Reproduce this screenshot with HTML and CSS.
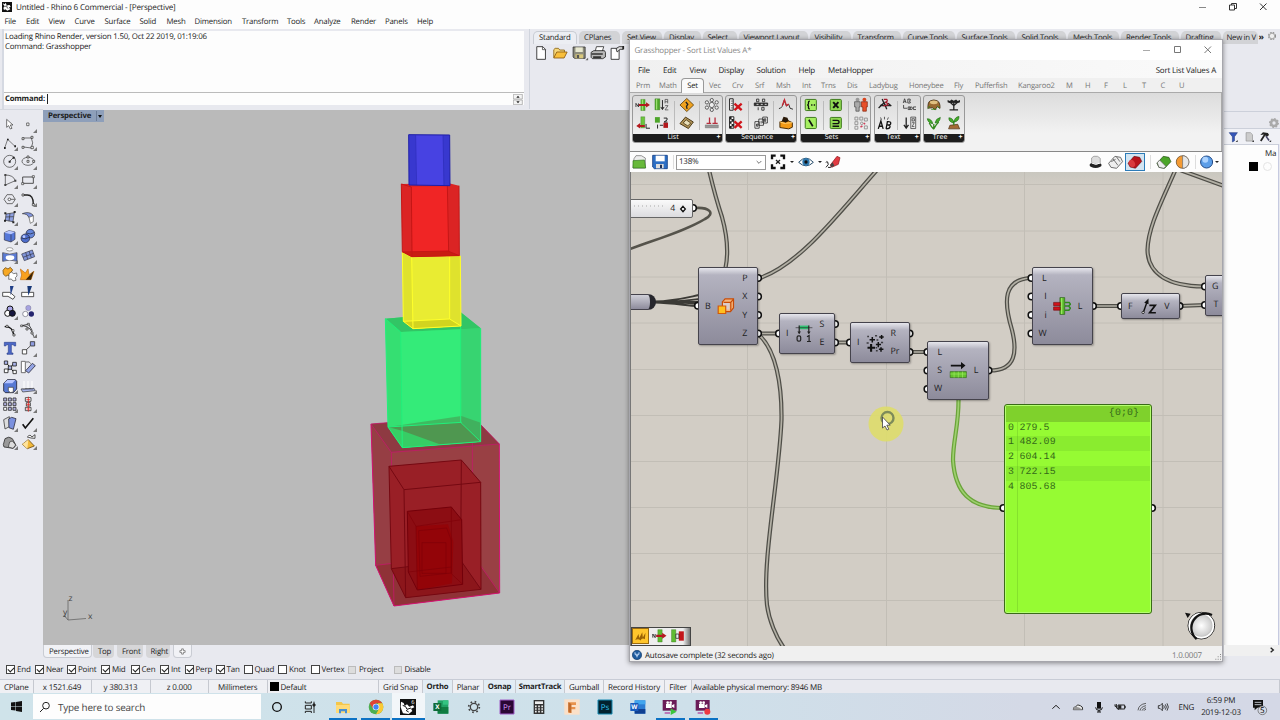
FILE: index.html
```html
<!DOCTYPE html>
<html lang="en">
<head>
    <meta charset="UTF-8">
    <meta name="viewport" content="width=device-width, initial-scale=1.0">
    <title>Untitled - Rhino 6 Commercial - [Perspective]</title>
    <link rel="stylesheet" href="styles.css">
</head>
<body>
    <!-- Rhino title bar -->
    <div class="titlebar">
        <svg class="app-icon" viewBox="0 0 30 30"><rect width="30" height="30" fill="#111"/><path d="M2 4l6 3 3-5 3 8 9-1 3 6-5 1 4 6-9 4-6-4-4 2-2-7 4-3z" fill="#fff"/><path d="M8 12l6 2 4 6M14 9l2 4" stroke="#111" stroke-width="2" fill="none"/></svg>
        <span class="title-text">Untitled - Rhino 6 Commercial - [Perspective]</span>
        <svg class="win-buttons" viewBox="0 0 84 14" fill="none" stroke="#333"><path d="M3 7.500h7" stroke="#888"/><path d="M33.500 5h5v5h-5zM35.500 5V3.500h5v5H39"/><path d="M64 3.500l6.500 6.500M70.500 3.500L64 10"/></svg>
    </div>
    <nav class="menubar">
        <span>File</span><span>Edit</span><span>View</span><span>Curve</span><span>Surface</span><span>Solid</span><span>Mesh</span><span>Dimension</span><span>Transform</span><span>Tools</span><span>Analyze</span><span>Render</span><span>Panels</span><span>Help</span>
    </nav>

    <!-- Command history and toolbar tabs -->
    <div class="top">
        <div class="command">
            <div class="history">
                <p class="line1">Loading Rhino Render, version 1.50, Oct 22 2019, 01:19:06</p>
                <p class="line2">Command: Grasshopper</p>
            </div>
            <div class="prompt">
                <b>Command:</b><i class="caret"></i>
                <svg class="spinner" viewBox="0 0 30 33"><path d="M1 1h27v14H1zM1 18h27v14H1z" fill="#f4f4f4" stroke="#999" stroke-width="2"/><path d="M15 5l5 6H10zM15 28l5-6H10z" fill="#222"/></svg>
            </div>
        </div>
        <div class="toolbars">
            <div class="tabs">
                <span class="active">Standard</span><span>CPlanes</span><span>Set View</span><span>Display</span><span>Select</span><span>Viewport Layout</span><span>Visibility</span><span>Transform</span><span>Curve Tools</span><span>Surface Tools</span><span>Solid Tools</span><span>Mesh Tools</span><span>Render Tools</span><span>Drafting</span><span class="last">New in V</span><b>»</b>
                <svg class="gear" viewBox="0 0 30 30"><circle cx="15" cy="15" r="10" fill="#ddd" stroke="#888" stroke-width="4" stroke-dasharray="5 3"/><circle cx="15" cy="15" r="8" fill="#eee" stroke="#999" stroke-width="2"/></svg>
            </div>
            <div class="file-icons">
                <svg viewBox="0 0 56 48"><path d="M14 5h18l8 8v30H14z" fill="#fff" stroke="#222" stroke-width="2.500"/><path d="M31 5v9h9" fill="none" stroke="#222" stroke-width="2"/></svg>
                <svg viewBox="0 0 56 48"><path d="M8 38V14l4-4h10l4 5h14v8" fill="#f6d77a" stroke="#8a6414" stroke-width="2.500"/><path d="M8 39l9-18h31l-9 18z" fill="#f8bf3b" stroke="#8a5a10" stroke-width="2.500"/></svg>
                <svg viewBox="0 0 56 48"><path d="M9 6h36v34H13l-4-4z" fill="#8c8c7c" stroke="#333" stroke-width="2.500"/><path d="M16 7h22v14H16z" fill="#e8e8d0"/><path d="M16 28h23v12H16z" fill="#d8c87c"/><path d="M20 30h7v9h-7z" fill="#555"/><path d="M54 38v8h-8z" fill="#666"/></svg>
                <svg viewBox="0 0 56 48"><path d="M18 20l4-15h22l-5 15z" fill="#fff" stroke="#333" stroke-width="2.500"/><path d="M6 22l8-5h32l3 5v14l-8 5H10l-4-4z" fill="#b9b9b9" stroke="#222" stroke-width="2.500"/><path d="M7 25h34v4H7zM12 34h24v5H12z" fill="#333"/></svg>
                <svg viewBox="0 0 56 48"><path d="M9 10h24v33H9z" fill="#fff" stroke="#222" stroke-width="2.500"/><path d="M24 11l9-6h12v8h-9l-9 8z" fill="#ddd" stroke="#222" stroke-width="2.500"/><path d="M43 3h5v10h-5z" fill="#222"/></svg>
            </div>
        </div>
    </div>

    <div class="workspace">
        <!-- Main tool palette, two columns -->
        <aside class="palette">
            <svg viewBox="0 0 54 56"><path d="M17 13v24l6-5 5 10 5-2-5-10h8z" fill="#fff" stroke="#333" stroke-width="2"/></svg>
            <div class="more"><svg viewBox="0 0 54 56"><path d="M23 24h7v8h-7z" fill="#fff" stroke="#333" stroke-width="2"/></svg></div>
            <div class="more"><svg viewBox="0 0 54 56"><path d="M11 42l9-26 22 21" fill="none" stroke="#444" stroke-width="2"/><path d="M9 39h5v6H9zM18 14h5v5h-5zM40 34h5v6h-5z" fill="#222"/></svg></div>
            <div class="more"><svg viewBox="0 0 54 56"><path d="M13 12h24q8 14 0 30L13 39" fill="none" stroke="#333" stroke-width="2"/><path d="M9 11h6v6H9zM36 7h6v6h-6zM9 37h6v6H9zM36 37h7v7h-7z" fill="#fff" stroke="#222" stroke-width="2"/></svg></div>
            <div class="more"><svg viewBox="0 0 54 56"><circle cx="26" cy="28" r="18" fill="none" stroke="#333" stroke-width="2"/><path d="M25 29l12-12" stroke="#222" stroke-width="2"/><path d="M23 26h6v6h-6zM35 14h6v6h-6z" fill="#222"/></svg></div>
            <div class="more"><svg viewBox="0 0 54 56"><ellipse cx="27" cy="28" rx="18" ry="12" fill="none" stroke="#333" stroke-width="2"/><path d="M24 12h6v6h-6zM24 25h6v6h-6zM41 25h6v6h-6z" fill="#fff" stroke="#222" stroke-width="2"/></svg></div>
            <div class="more"><svg viewBox="0 0 54 56"><path d="M13 12q24 0 30 17L13 42z" fill="none" stroke="#333" stroke-width="2"/><path d="M10 9h6v6h-6zM10 39h6v6h-6zM40 26h6v6h-6z" fill="#444"/></svg></div>
            <div class="more"><svg viewBox="0 0 54 56"><path d="M11 18h32v19H11z" fill="none" stroke="#333" stroke-width="2.500"/><path d="M8 35h6v6H8zM40 14h6v6h-6z" fill="#fff" stroke="#333" stroke-width="2"/></svg></div>
            <div class="more"><svg viewBox="0 0 54 56"><path d="M18 14h16l9 14-9 13H18l-9-13z" fill="none" stroke="#555" stroke-width="2.500"/><path d="M24 28h18" stroke="#333" stroke-width="2"/><circle cx="25" cy="28" r="4" fill="#fff" stroke="#222" stroke-width="2"/></svg></div>
            <div class="more"><svg viewBox="0 0 54 56"><path d="M13 15h12q18 0 18 27" fill="none" stroke="#222" stroke-width="4"/><path d="M9 12h6v6H9zM40 41h6v6h-6z" fill="#fff" stroke="#222" stroke-width="2"/></svg></div>
            <div class="more"><svg viewBox="0 0 54 56"><path d="M15 18l25-4-4 27-23-4z" fill="#8d9fe0" stroke="#333" stroke-width="2"/><path d="M27 16l-3 24M14 27l24-1" stroke="#333" stroke-width="2"/><path d="M10 13h6v6h-6zM38 9h6v6h-6zM9 35h6v6H9zM34 40h6v6h-6z" fill="#222"/></svg></div>
            <div class="more"><svg viewBox="0 0 54 56"><path d="M10 17q20-8 32 4l-3 20q-4-13-10-13-2-10-19-11z" fill="#7f93dd" stroke="#333" stroke-width="2"/><path d="M30 28l13-5v18l-9 5z" fill="#fff" stroke="#555" stroke-width="2"/></svg></div>
            <div class="more"><svg viewBox="0 0 54 56"><path d="M10 17l14-6 18 4v22l-12 8-20-6z" fill="#5577d8" stroke="#334" stroke-width="2"/><path d="M10 17l20 5 12-7-18-4z" fill="#b9c8ff"/><path d="M30 22v23" stroke="#334" stroke-width="2"/></svg></div>
            <div class="more"><svg viewBox="0 0 54 56"><circle cx="34" cy="20" r="13" fill="#6686da" stroke="#223" stroke-width="2"/><circle cx="19" cy="34" r="13" fill="#4d6dcb" stroke="#223" stroke-width="2"/><path d="M7 33q12 6 24-2M22 18q12 6 24-1" stroke="#223" stroke-width="2" fill="none"/><circle cx="15" cy="29" r="4" fill="#b9c8ff"/></svg></div>
            <div class="more"><svg viewBox="0 0 54 56"><ellipse cx="26" cy="10" rx="10" ry="5" fill="#fff" stroke="#777" stroke-width="2"/><path d="M5 20q21 9 43 0v26q-22-8-43 0z" fill="#5a7ad4" stroke="#334" stroke-width="2"/><ellipse cx="27" cy="35" rx="13" ry="7" fill="#fff"/></svg></div>
            <div class="more"><svg viewBox="0 0 54 56"><path d="M8 24l32-12 7 20-31 12z" fill="#7f93d8" stroke="#334" stroke-width="2"/><path d="M12 34l32-12M20 19l6 21M30 15l7 20" stroke="#334" stroke-width="2"/></svg></div>
            <svg viewBox="0 0 54 56"><path d="M6 16l7-8 8 4 7-5 7 8-5 7 5 7-9 5-5-4-7 4-7-7z" fill="#f7a823" stroke="#7a5312" stroke-width="2.500"/><path d="M24 26l7-5 7 5 9-2 1 9-5 5 2 8-9 2-5-6-8 1z" fill="#fff" stroke="#444" stroke-width="2"/></svg>
            <svg viewBox="0 0 54 56"><path d="M4 12l15 12 8-12 3 17 15-10-9 25H4l4-14z" fill="#f9a11f" stroke="#c06c10" stroke-width="2"/><path d="M20 44l24-26-8 26z" fill="#3a2508"/></svg>
            <svg viewBox="0 0 54 56"><path d="M5 28h22l15 13-6 8-15-9H5z" fill="#fff" stroke="#333" stroke-width="2.500"/><path d="M27 9h11L29 37z" fill="#203f88"/></svg>
            <svg viewBox="0 0 54 56"><path d="M8 28h36v13H8z" fill="#fff" stroke="#333" stroke-width="2.500"/><path d="M25 9h14L28 38z" fill="#173878"/></svg>
            <div class="more"><svg viewBox="0 0 54 56"><circle cx="27" cy="21" r="9" fill="#aaa6e8" stroke="#111" stroke-width="3"/><circle cx="20" cy="34" r="9" fill="#fff" stroke="#111" stroke-width="3"/><circle cx="34" cy="34" r="9" fill="#16163f" stroke="#111" stroke-width="3"/></svg></div>
            <svg viewBox="0 0 54 56"><circle cx="28" cy="18" r="8" fill="#a6a2e0" stroke="#667"/><circle cx="19" cy="36" r="8" fill="#fff" stroke="#667" stroke-width="2"/><circle cx="37" cy="36" r="8" fill="#24246e"/></svg>
            <svg viewBox="0 0 54 56"><path d="M11 17q23-2 27 24" fill="none" stroke="#111" stroke-width="4"/><path d="M15 13h6v6h-6zM33 26h6v6h-6zM36 39h6v6h-6z" fill="#fff" stroke="#222" stroke-width="2"/></svg>
            <div class="more"><svg viewBox="0 0 54 56"><path d="M8 14l20-4M12 14q26 3 32 33M28 9l12 20" fill="none" stroke="#222" stroke-width="2.500"/><path d="M5 12h6v5H5zM25 7h6v5h-6zM21 21h6v6h-6zM36 33h6v6h-6z" fill="#fff" stroke="#222" stroke-width="2"/></svg></div>
            <svg viewBox="0 0 54 56"><path d="M10 10h34v11h-4l-3-4h-6v25h5v4H18v-4h4V17h-5l-3 4h-4z" fill="#4c68c8" stroke="#304590" stroke-width="2"/></svg>
            <div class="more"><svg viewBox="0 0 54 56"><path d="M10 32h13v13H10z" fill="#fff" stroke="#333" stroke-width="2.500"/><path d="M34 8h13v13H34z" fill="#8e9be0" stroke="#333" stroke-width="2.500"/><path d="M22 32l11-10" stroke="#333" stroke-width="2.500"/></svg></div>
            <svg viewBox="0 0 54 56"><path d="M18 17l20 25M38 17L18 40" stroke="#222" stroke-width="3"/><path d="M10 9h10v10H10zM35 13h11v11H35zM22 24h10v10H22z" fill="#aab4ea" stroke="#222" stroke-width="2.500"/><path d="M10 33h11v11H10zM36 37h10v10H36z" fill="#fff" stroke="#222" stroke-width="2.500"/></svg>
            <svg viewBox="0 0 54 56"><path d="M7 10h12v34H7z" fill="#fff" stroke="#555" stroke-width="2.500"/><path d="M20 38l20-22 9 7-20 22z" fill="#93a3e4" stroke="#334" stroke-width="2.500"/><path d="M21 12q12-3 14 5" fill="none" stroke="#333" stroke-width="2"/></svg>
            <div class="more"><svg viewBox="0 0 54 56"><path d="M8 19l11-11h24l4 5v23l-10 11H13l-5-5z" fill="#5879d4" stroke="#223" stroke-width="2.500"/><path d="M9 19l10-10h24l-9 10z" fill="#b7c5ff"/><path d="M22 31h15v14l-10 2-5-7z" fill="#fff" stroke="#333" stroke-width="2"/></svg></div>
            <div class="more"><svg viewBox="0 0 54 56"><path d="M6 36l39-2 4 7-38 4z" fill="#a7b4ec" stroke="#333" stroke-width="2"/><path d="M15 12v24M27 12v22M39 12v22" stroke="#fff" stroke-width="3"/><path d="M11 36h32" stroke="#333" stroke-width="2"/></svg></div>
            <div class="more"><svg viewBox="0 0 54 56"><g fill="#b4b4e4" stroke="#333" stroke-width="2.500"><path d="M8 9h9v9H8zM22 9h9v9h-9zM36 9h9v9h-9zM8 23h9v9H8zM22 23h9v9h-9zM36 23h9v9h-9zM22 37h9v9h-9zM36 37h9v9h-9z"/><path d="M8 37h9v9H8z" fill="#fff"/></g></svg></div>
            <div class="more"><svg viewBox="0 0 54 56"><path d="M19 8h17v11H19zM22 23h12v10H22zM19 37h17v10H19z" fill="#fff" stroke="#333" stroke-width="2.500"/><path d="M28 5v45M22 14h11M22 28h11M22 42h11" stroke="#d22" stroke-width="2.500"/></svg></div>
            <div class="more"><svg viewBox="0 0 54 56"><path d="M8 17l17-9v30L12 45z" fill="#ddd" stroke="#444" stroke-width="2.500"/><path d="M23 15l9-5 13 4-8 32-13-5z" fill="#7b91df" stroke="#334" stroke-width="2.500"/></svg></div>
            <div class="more"><svg viewBox="0 0 54 56"><path d="M11 31l8 11 24-29" fill="none" stroke="#111" stroke-width="5"/></svg></div>
            <div class="more"><svg viewBox="0 0 54 56"><path d="M7 35l5-18q12-9 22 0l11 20-8 9-28-4z" fill="#999" stroke="#333" stroke-width="2.500"/><path d="M22 42l4-15 8-3 10 12-8 10z" fill="#ddd" stroke="#333" stroke-width="2"/></svg></div>
            <div class="more"><svg viewBox="0 0 54 56"><path d="M28 20l18 19-21 8-15-13z" fill="#f1b93b" stroke="#6f4b10" stroke-width="2.500"/><path d="M28 20l-3 27-15-13z" fill="#ffe39a"/><path d="M25 12q8-10 14 0l9-7v11l-12-1z" fill="#fff" stroke="#333" stroke-width="2.500"/></svg></div>
        </aside>

        <!-- Perspective viewport -->
        <main class="viewport">
            <div class="view-label"><b>Perspective</b><i></i></div>
            <svg class="scene" viewBox="43 110 586 535">
                <g transform="translate(350 120) scale(.33333)" stroke-linejoin="round">
                    <!-- outer crimson box -->
                    <path d="M63 912l304-24 81 84 1 447-317 39-55-122z" fill="#994044"/>
                    <path d="M63 912l61 85 324-25-81-84z" fill="#8e3a42"/>
                    <path d="M63 912l61 85 8 461-55-122z" fill="#963e44"/>
                    <path d="M77 1336l290-34 82 117-317 39z" fill="#8f3237"/>
                    <g fill="none" stroke="#c4186b" stroke-width="3"><path d="M63 912l14 424 55 122 317-39-1-447" stroke="#d41273"/><path d="M63 912l61 85 8 461M124 997l324-25M63 912l304-24 81 84M367 888v414l82 117M77 1336l290-34" opacity=".8"/></g>
                    <!-- nested boxes -->
                    <path d="M117 1039l217-19 58 67 1 321-226 25-43-87z" fill="#991f26"/>
                    <path d="M124 1346l208-25 61 87-226 25z" fill="#8c161b"/>
                    <path d="M117 1039l217-19 58 67 1 321-226 25-43-87zM117 1039l45 70 5 324M162 1109l230-22M334 1020l-2 301 61 87M124 1346l208-25" fill="none" stroke="#740811" stroke-width="3"/>
                    <path d="M172 1174l132-13 31 38 3 194-136 17-27-54z" fill="#8c0d13"/>
                    <path d="M198 1219l96-6 16 52-4 125-104 20z" fill="#930408"/>
                    <path d="M172 1174l132-13 31 38 3 194-136 17-27-54z" fill="none" stroke="#72000a" stroke-width="3"/>
                    <path d="M172 1174l26 45 4 191M198 1219l137-20M304 1161v200l34 32M175 1356l129-15M206 1232l84-8 14 38v97l-94 10zM216 1268h72v92h-72z" fill="none" stroke="#7e0008" stroke-width="2"/>
                    <!-- green box -->
                    <path d="M106 596l226-19 60 48v340l-235 18-43-62z" fill="#35df72"/>
                    <path d="M106 596l226-19 60 48-240 11z" fill="#32c565"/>
                    <path d="M152 636l180-8v280l60 57-235 18z" fill="#34eb79"/>
                    <path d="M332 628l60-3v340l-57-58z" fill="#37d471"/>
                    <path d="M114 921l221-14 57 58-235 18z" fill="#4f9750"/>
                    <path d="M114 921l43 62 112-10-110-40z" fill="#37cd65"/>
                    <path d="M114 921l220-33 58 20v57l-57-58z" fill="#49944e" opacity=".55"/>
                    <path d="M106 596l8 325 43 62 235-18V625M106 596l46 40 5 347M332 590v317l60 58M114 921l221-14" fill="none" stroke="#20f07a" stroke-width="3"/>
                    <!-- yellow box -->
                    <path d="M157 396l146-4 28 16 2 210-144 8-29-22z" fill="#dfe22d"/>
                    <path d="M185 410l114-2v188l34 22-144 8z" fill="#e9ec32"/>
                    <path d="M160 604l139-7 34 21-144 8z" fill="#d2d41f"/>
                    <path d="M157 396l3 208 29 22 144-8-2-210-146 2zM185 410l4 216M299 408v189l34 21M160 604l139-7" fill="none" stroke="#ffff2a" stroke-width="3"/>
                    <!-- red box -->
                    <path d="M154 192l140-3 33 8 1 210-143 3-28-15z" fill="#db2424"/>
                    <path d="M184 200l110-1 1 195-108 15z" fill="#f02525"/>
                    <path d="M157 396l138-3 33 14-143 3z" fill="#c91d12"/>
                    <path d="M154 192l3 203 28 15 143-3-1-210M154 192l30 9 2 209M292 196l4 198 32 13M157 396l138-3" fill="none" stroke="#c51616" stroke-width="3"/>
                    <!-- blue box -->
                    <path d="M176 44l123 1 1 152-123-2z" fill="#3838cf"/>
                    <path d="M197 46h82l2 149h-82z" fill="#4742e2"/>
                    <path d="M197 46l3 150M279 46l3 150" fill="none" stroke="#2c2cb8" stroke-width="2"/>
                    <path d="M176 44l123 1 1 152-123-2z" fill="none" stroke="#1f1fa8" stroke-width="3"/>
                </g>
                <g fill="none" stroke="#666" stroke-width=".8"><path d="M68 600v20l18-1.500M64 615l4 5M63 616l3 1"/></g>
                <g class="axis"><text x="68.500" y="601">z</text><text x="63" y="615">y</text><text x="88" y="619">x</text></g>
            </svg>
        </main>

        <!-- Layer panel -->
        <aside class="layers">
            <div class="layers-head"><svg class="gear" viewBox="0 0 30 30"><circle cx="15" cy="15" r="9" fill="none" stroke="#aaa" stroke-width="8"/><circle cx="15" cy="15" r="13" fill="none" stroke="#aaa" stroke-width="4" stroke-dasharray="5 5"/></svg></div>
            <div class="layers-tools">
                <svg viewBox="0 0 48 48"><path d="M11 9h28L29 23v14l-7 4V23z" fill="#3656b8" stroke="#223a80" stroke-width="2"/><path d="M40 34v7h-7z" fill="#333"/></svg>
                <svg viewBox="0 0 48 48"><path d="M14 9h15l7 7v22H14z" fill="#ccc" stroke="#888" stroke-width="2"/><path d="M41 34v7h-7z" fill="#333"/></svg>
                <svg viewBox="0 0 48 48"><path d="M8 17l9-9 17 2 4 7-7 6-6-4-13 20-5-3 13-21z" fill="#222"/><path d="M27 21l11 15" stroke="#446" stroke-width="5"/><path d="M45 34v7h-7z" fill="#333"/></svg>
            </div>
            <div class="layers-list"><p>Ma</p><div class="layer-row"><i class="swatch"></i><i class="material"></i></div></div>
            <div class="layers-scroll"><svg viewBox="0 0 30 30"><path d="M11 8l8 7-8 7" fill="none" stroke="#222" stroke-width="4"/></svg></div>
        </aside>
    </div>

    <div class="view-tabs"><span class="active">Perspective</span><span>Top</span><span>Front</span><span>Right</span><span class="add"><svg viewBox="0 0 24 24"><path d="M9 3h6v6h6v6h-6v6H9v-6H3V9h6z" fill="#fff" stroke="#666" stroke-width="2.500"/></svg></span></div>

    <!-- Object snaps -->
    <div class="osnap">
        <label><i class="on"></i>End</label><label><i class="on"></i>Near</label><label><i class="on"></i>Point</label><label><i class="on"></i>Mid</label><label><i class="on"></i>Cen</label><label><i class="on"></i>Int</label><label><i class="on"></i>Perp</label><label><i class="on"></i>Tan</label><label><i></i>Quad</label><label><i></i>Knot</label><label><i></i>Vertex</label><label><i class="off"></i>Project</label><label><i class="off"></i>Disable</label>
    </div>

    <footer class="status">
        <span>CPlane</span><span>x 1521.649</span><span>y 380.313</span><span>z 0.000</span><span>Millimeters</span><span class="layer"><i></i>Default</span><span>Grid Snap</span><b>Ortho</b><span>Planar</span><b>Osnap</b><b>SmartTrack</b><span>Gumball</span><span>Record History</span><span>Filter</span><span class="memory">Available physical memory: 8946 MB</span>
    </footer>

    <!-- Windows taskbar -->
    <div class="taskbar">
        <div class="start"><svg viewBox="0 0 22 22"><path d="M0 3l9-1v8H0zM10 2l12-2v10H10zM0 11h9v8l-9-1zM10 11h12v11l-12-2z" fill="#111"/></svg></div>
        <div class="search"><svg viewBox="0 0 36 36"><circle cx="21" cy="14" r="10" fill="none" stroke="#222" stroke-width="3"/><path d="M14 22L3 33" stroke="#222" stroke-width="3"/></svg><span>Type here to search</span></div>
        <div class="apps">
            <span><svg viewBox="0 0 48 48"><circle cx="24" cy="24" r="13" fill="none" stroke="#111" stroke-width="4"/></svg></span>
            <span><svg viewBox="0 0 48 48" fill="none" stroke="#222" stroke-width="3"><path d="M10 7v5h18V7M10 19h18v11H10zM10 42v-5h18v5M36 8v34"/><path d="M33 15h6v6h-6z" fill="#222"/></svg></span>
            <span class="open"><svg viewBox="0 0 48 48"><path d="M3 9h17l4 5h20v27H3z" fill="#f4c64a"/><path d="M3 18h41v24H3z" fill="#ffdb78"/><path d="M12 30h24v13h-6v-6H18v6h-6z" fill="#4a90d0"/></svg></span>
            <span class="open"><svg viewBox="0 0 48 48"><circle cx="24" cy="24" r="22" fill="#4caf50"/><path d="M5 13a22 22 0 0 1 38 0H24l-9 16z" fill="#e04434"/><path d="M43 13a22 22 0 0 1-19 33l9-17-3-16z" fill="#fbc934"/><circle cx="24" cy="24" r="10" fill="#fff"/><circle cx="24" cy="24" r="8" fill="#4285f4"/></svg></span>
            <span class="open current"><svg viewBox="0 0 48 48"><path d="M0 0h48v48H0z" fill="#111"/><path d="M3 8l8 4 3 9 7-5 7 7 11-4 4 6-10 4 4 7-11 9-17-2-4-10-3-9z" fill="#fff"/><path d="M8 19l9 4 4 8 12-4M18 34l8 5" stroke="#111" stroke-width="3" fill="none"/><text class="six" x="34" y="16">6</text></svg></span>
            <span><svg viewBox="0 0 48 48"><path d="M14 4h32v40H14z" fill="#21a366"/><path d="M30 4h16v13H30z" fill="#33c481"/><path d="M14 24h32v20H14z" fill="#107c41"/><path d="M1 12h24v24H1z" fill="#0e6b39"/><text class="glyph" x="13" y="31">X</text></svg></span>
            <span><svg viewBox="0 0 48 48"><circle cx="24" cy="24" r="11" fill="none" stroke="#444" stroke-width="4"/><circle cx="24" cy="24" r="16" fill="none" stroke="#444" stroke-width="5" stroke-dasharray="5 7.560"/></svg></span>
            <span><svg viewBox="0 0 48 48"><path d="M3 3h42v42H3z" fill="#2a0634" stroke="#a05cc8" stroke-width="3"/><text class="glyph big pr" x="24" y="32">Pr</text></svg></span>
            <span><svg viewBox="0 0 48 48"><path d="M8 3h32v42H8z" fill="#333"/><path d="M12 7h24v8H12z" fill="#eee"/><path d="M12 22h25M12 30h25M12 38h25" stroke="#eee" stroke-width="5" stroke-dasharray="5 4.500"/></svg></span>
            <span><svg viewBox="0 0 48 48"><path d="M1 1h46v46H1z" fill="#fbe0c8"/><path d="M13 10h23v8H22v6h12v7H22v11h-9z" fill="#e8914b"/><path d="M13 10l9 5v27l-9-4z" fill="#c06a2b"/></svg></span>
            <span><svg viewBox="0 0 48 48"><path d="M3 3h42v42H3z" fill="#02222f" stroke="#1287b0" stroke-width="3"/><text class="glyph big ps" x="24" y="32">Ps</text></svg></span>
            <span><svg viewBox="0 0 48 48"><path d="M14 4h32v40H14z" fill="#2b7cd3"/><path d="M14 4h32v12H14z" fill="#41a5ee"/><path d="M14 30h32v14H14z" fill="#103f91"/><path d="M1 12h24v24H1z" fill="#185abd"/><text class="glyph" x="13" y="31">W</text></svg></span>
            <span class="open"><svg viewBox="0 0 48 48"><path d="M2 3h42v32H2z" fill="#6b1c58"/><path d="M12 15h17v12H12zM30 19l7-4v12l-7-4z" fill="#fff"/><circle cx="17" cy="11" r="4" fill="#fff"/><circle cx="26" cy="11" r="4" fill="#fff"/><path d="M26 28l18 10-18 10z" fill="#3ac63c"/><path d="M8 42h16" stroke="#a18" stroke-width="3"/></svg></span>
            <span class="open"><svg viewBox="0 0 48 48"><path d="M2 3h42v32H2z" fill="#6b1c58"/><path d="M12 15h17v12H12zM30 19l7-4v12l-7-4z" fill="#fff"/><circle cx="17" cy="11" r="4" fill="#fff"/><circle cx="26" cy="11" r="4" fill="#fff"/><circle cx="37" cy="38" r="9" fill="#ee3a42"/><path d="M8 42h16" stroke="#a18" stroke-width="3"/></svg></span>
        </div>
        <div class="tray">
            <svg viewBox="0 0 36 36"><path d="M7 23l11-10 11 10" fill="none" stroke="#222" stroke-width="3"/></svg>
            <svg viewBox="0 0 36 36"><path d="M4 26q-1-8 7-9 6-9 14-3 8 2 7 12z" fill="#eee" stroke="#333" stroke-width="3"/><path d="M4 26q-1-8 7-9 10 0 21 9z" fill="#999"/></svg>
            <svg viewBox="0 0 36 36"><path d="M12 3h12v20H12z" fill="#111"/><path d="M8 19q0 9 10 9t10-9M18 27v6M12 33h12" fill="none" stroke="#111" stroke-width="3"/></svg>
            <svg viewBox="0 0 36 36"><path d="M12 12h20v12H12z" fill="none" stroke="#222" stroke-width="3"/><path d="M13 13h9v10h-9zM32 15h3v6h-3z" fill="#222"/><path d="M3 10v6h6M7 9v9q0 6 8 7" fill="none" stroke="#222" stroke-width="3"/></svg>
            <svg viewBox="0 0 36 36" fill="none" stroke="#444" stroke-width="2.500"><path d="M6 28Q8 10 30 7M12 29q2-12 18-15M18 29q2-7 12-9M24 29q1-3 6-4"/></svg>
            <svg viewBox="0 0 36 36" fill="none" stroke="#222" stroke-width="2.500"><path d="M4 14h5l7-7v22l-7-7H4zM20 13q4 5 0 10M25 10q6 8 0 16M30 7q8 11 0 22"/></svg>
            <span class="lang">ENG</span>
            <div class="clock"><span>6:59 PM</span><span>2019-12-03</span></div>
            <svg class="notify" viewBox="0 0 54 54"><path d="M6 6h30v23H19l-8 8v-8H6z" fill="#111"/><path d="M11 13h20M11 20h20" stroke="#d8dde8" stroke-width="2.500"/><circle cx="34" cy="37" r="13" fill="#d5dae6" stroke="#555" stroke-width="2"/><text x="34" y="46">5</text></svg>
        </div>
    </div>

    <!-- Grasshopper window -->
    <section class="gh">
        <header class="gh-title"><span>Grasshopper - Sort List Values A*</span>
            <svg viewBox="0 0 72 12" fill="none" stroke="#777"><path d="M0 6.500h7" stroke="#aaa"/><path d="M31.500 2.500h6v6h-6zM61.500 2.500l6.500 6.500M68 2.500L61.500 9"/></svg></header>
        <nav class="gh-menu"><span>File</span><span>Edit</span><span>View</span><span>Display</span><span>Solution</span><span>Help</span><span>MetaHopper</span><span class="doc">Sort List Values A</span></nav>
        <nav class="gh-tabs"><span>Prm</span><span>Math</span><span class="active">Set</span><span>Vec</span><span>Crv</span><span>Srf</span><span>Msh</span><span>Int</span><span>Trns</span><span>Dis</span><span>Ladybug</span><span>Honeybee</span><span>Fly</span><span>Pufferfish</span><span>Kangaroo2</span><span>M</span><span>H</span><span>F</span><span>L</span><span>T</span><span>C</span><span>U</span></nav>

        <div class="ribbon">
            <div class="group">
                <div class="cells">
                    <div class="col">
                        <svg viewBox="0 0 60 55"><path d="M24 10h13v34H24z" fill="#56b32c" stroke="#2c6a14"/><path d="M29 10v34" stroke="#9be070" stroke-width="4"/><path d="M9 33V22l8 11V22" fill="none" stroke="#222" stroke-width="2.500"/><path d="M18 24h22v-5l12 8-12 8v-5H18z" fill="#b3191d"/></svg>
                        <svg viewBox="0 0 60 55"><path d="M24 8h12v34H24z" fill="#6cc53e" stroke="#2c6a14"/><path d="M40 30v13h12" fill="none" stroke="#222" stroke-width="3"/><path d="M36 33H22v-6l-12 9 12 8v-5h14z" fill="#b3191d"/></svg>
                    </div>
                    <div class="col">
                        <svg viewBox="0 0 60 55"><path d="M9 8h15v34H9z" fill="#4ea62a" stroke="#2c6a14"/><path d="M14 9v32" stroke="#9be070" stroke-width="4"/><path d="M32 12v28M27 33l5 8 5-8" fill="none" stroke="#222" stroke-width="3"/><path d="M40 22V10h8v12M40 17h8M40 29h9l-9 13h10" fill="none" stroke="#555" stroke-width="2.500"/></svg>
                        <svg viewBox="0 0 60 55"><path d="M9 9h15v17H9z" fill="#4ea62a"/><path d="M35 26h14v16H35z" fill="#b3191d"/><path d="M36 12h10v6l-9 6h10M17 32v12M24 34h10" fill="none" stroke="#222" stroke-width="3"/></svg>
                    </div>
                    <i class="sep"></i>
                    <div class="col">
                        <svg viewBox="0 0 60 55"><path d="M30 7l21 20-21 20L9 27z" fill="#f0a21f" stroke="#5a3d0a" stroke-width="2.500"/><path d="M27 18l6 7-4 6 2 8" fill="none" stroke="#222" stroke-width="4"/></svg>
                        <svg viewBox="0 0 60 55"><path d="M26 9l24 15-15 20L9 29z" fill="#b39559" stroke="#493816" stroke-width="3"/><path d="M28 17l14 10-9 9-14-9z" fill="#e9dfb8" stroke="#493816" stroke-width="2.500"/></svg>
                    </div>
                    <i class="sep"></i>
                    <div class="col">
                        <svg viewBox="0 0 60 55"><g fill="#eee" stroke="#444" stroke-width="2.500"><circle cx="30" cy="27" r="8"/><circle cx="30" cy="12" r="5"/><circle cx="30" cy="42" r="5"/><circle cx="15" cy="19" r="5"/><circle cx="45" cy="19" r="5"/><circle cx="15" cy="35" r="5"/><circle cx="45" cy="35" r="5"/></g></svg>
                        <svg viewBox="0 0 60 55"><path d="M10 33h40v9H10z" fill="#999" stroke="#555"/><path d="M23 10v17M40 10v17M14 28h14M32 28h16" stroke="#b5303e" stroke-width="4"/></svg>
                    </div>
                </div>
                <p>List<b>+</b></p>
            </div>

            <div class="group">
                <div class="cells">
                    <div class="col">
                        <svg viewBox="0 0 60 55"><path d="M11 8h11v35H11z" fill="#fff" stroke="#222" stroke-width="3"/><path d="M15 15h6M15 22h6M15 29h6M15 36h6" stroke="#222" stroke-width="2"/><path d="M26 23l22 20M48 23L26 43" stroke="#d0151b" stroke-width="7"/></svg>
                        <svg viewBox="0 0 60 55"><path d="M11 8h13v35H11z" fill="#fff" stroke="#222" stroke-width="3"/><path d="M11 8h6v7h7v8h-7v7h7v8h-7v5h-6v-7h6v-7h-6v-7h6v-6h-6z" fill="#222"/><path d="M26 22l22 20M48 22L26 42" stroke="#d0151b" stroke-width="7"/></svg>
                    </div>
                    <i class="sep"></i>
                    <div class="col">
                        <svg viewBox="0 0 60 55" fill="none" stroke="#222" stroke-width="2.500"><path d="M17 9h7v8h-7zM35 9h7v8h-7zM22 34v9M33 34h7v9h-7z"/><path d="M10 21h41v8H10z" fill="#333"/><path d="M17 25h6M30 25h6M42 25h6" stroke="#fff"/></svg>
                        <svg viewBox="0 0 60 55" fill="#fff" stroke="#222" stroke-width="2.500"><path d="M36 9h14v18H36zM24 15h14v19H24zM12 23h13v20H12zM17 30h4v7h-4zM31 20v9M41 14h4v8h-4z"/></svg>
                    </div>
                    <i class="sep"></i>
                    <div class="col">
                        <svg viewBox="0 0 60 55"><path d="M9 38q11 0 16-25l7 17 7-5 4 12 9 3" fill="none" stroke="#333" stroke-width="3"/><path d="M19 29l7-18 6 18 7-5" fill="none" stroke="#c52a35" stroke-width="4"/></svg>
                        <svg viewBox="0 0 60 55"><path d="M12 23l25-3 13 6v14l-11 5-27-4z" fill="#f49a16" stroke="#4a2c05" stroke-width="3"/><path d="M12 23l12 5 26-2" stroke="#ffd27a" stroke-width="3" fill="none"/><path d="M18 20l5-12 12 3 4 10-10 5z" fill="#2a1a0a"/></svg>
                    </div>
                </div>
                <p>Sequence<b>+</b></p>
            </div>

            <div class="group">
                <div class="cells">
                    <div class="col">
                        <svg viewBox="0 0 60 55"><rect x="13" y="10" width="34" height="34" rx="3" fill="#a6ef62" stroke="#3d7a1c" stroke-width="3"/><path d="M27 15q-5 0-4 7 0 5-4 5 4 0 4 5-1 7 4 7" fill="none" stroke="#111" stroke-width="4"/><path d="M31 27h4M39 27h4" stroke="#111" stroke-width="4"/></svg>
                        <svg viewBox="0 0 60 55"><rect x="13" y="10" width="34" height="34" rx="3" fill="#a6ef62" stroke="#3d7a1c" stroke-width="3"/><path d="M24 17l12 20" stroke="#111" stroke-width="5"/></svg>
                    </div>
                    <i class="sep"></i>
                    <div class="col">
                        <svg viewBox="0 0 60 55"><rect x="13" y="10" width="34" height="34" rx="3" fill="#8fd852" stroke="#3d7a1c" stroke-width="3"/><path d="M22 18l16 18M38 18L22 36" stroke="#111" stroke-width="6"/></svg>
                        <svg viewBox="0 0 60 55"><rect x="13" y="10" width="34" height="34" rx="3" fill="#8fd852" stroke="#3d7a1c" stroke-width="3"/><path d="M20 19h14q6 0 6 5t-6 5H20M20 37h20" fill="none" stroke="#111" stroke-width="4"/></svg>
                    </div>
                    <i class="sep"></i>
                    <div class="col">
                        <svg viewBox="0 0 60 55"><circle cx="20" cy="11" r="6" fill="#999"/><path d="M11 17h17v16h-3v13H15V33h-4z" fill="#aaa" stroke="#444" stroke-width="2"/><circle cx="41" cy="11" r="6" fill="#d8431d"/><path d="M32 17h18v16h-3v13H36V33h-4z" fill="#e8502a" stroke="#7a200a" stroke-width="2"/></svg>
                        <svg viewBox="0 0 60 55" fill="none" stroke="#888" stroke-width="2.500"><path d="M12 9h9v9h-9zM27 9h9v9h-9zM41 12h9v9h-9zM12 23h9v9h-9zM12 37h9v9h-9zM41 36h9v9h-9z"/><circle cx="33" cy="28" r="4"/><path d="M29 39l6-3M39 27l4 4" stroke="#d0405a" stroke-width="5"/></svg>
                    </div>
                </div>
                <p>Sets<b>+</b></p>
            </div>

            <div class="group">
                <div class="cells">
                    <div class="col">
                        <svg viewBox="0 0 60 55" fill="none" stroke-width="4"><path d="M11 36l17-16 8 20M15 28l33 1M22 9l6 14M40 22l10 8" stroke="#222"/><path d="M27 10h9q5 6-5 9 9 1 8 8l-13 3" stroke="#a31c2c"/></svg>
                        <svg viewBox="0 0 60 55" fill="none" stroke="#111" stroke-width="4"><path d="M10 45l8-24 7 24M13 37h10M34 45l4-22q12-1 10 6 0 4-10 4 9 0 8 6-1 6-12 6"/><path d="M17 10l3 7M29 8v8M41 10l-3 7" stroke-width="2"/></svg>
                    </div>
                    <i class="sep"></i>
                    <div class="col">
                        <svg viewBox="0 0 60 55" fill="none" stroke="#333" stroke-width="2.500"><path d="M10 21l4-13 5 13M12 17h6M24 21V9h7q3 5-3 6 6 2 3 6zM11 27v10h11M31 33h-6v8h6zM49 33h-8v8h8"/><circle cx="34" cy="37" r="4"/></svg>
                        <svg viewBox="0 0 60 55" fill="none" stroke="#222" stroke-width="3"><path d="M19 10v32M12 33l7 10 7-10" stroke-width="4"/><path d="M33 9h15v35H33zM37 14h7v7h-7zM37 26h7l-7 12h7" stroke-width="2"/></svg>
                    </div>
                </div>
                <p>Text<b>+</b></p>
            </div>

            <div class="group">
                <div class="cells">
                    <div class="col">
                        <svg viewBox="0 0 60 55"><path d="M12 37q-1-20 8-23 10-5 20 0 10 4 9 23l-9-5-6 10-8-7z" fill="#9a6a31" stroke="#3f2b10" stroke-width="2.500"/><ellipse cx="30" cy="19" rx="12" ry="6" fill="#e0c080"/><path d="M11 38l8-8M48 38l-8-8M22 40h16" stroke="#3c8a22" stroke-width="3"/></svg>
                        <svg viewBox="0 0 60 55"><path d="M30 46V30M30 46q-9-9-14-19M30 45q7-14 15-21" stroke="#348a1e" stroke-width="4" fill="none"/><path d="M10 14q13 0 17 15-14-1-17-15zM50 10q-14 3-16 17 14-1 16-17z" fill="#45ad2a" stroke="#1f6a12" stroke-width="2"/></svg>
                    </div>
                    <div class="col">
                        <svg viewBox="0 0 60 55"><path d="M11 12l7 3 5-5 7 4 7-4 5 5 7-3v7l-8 3-11-2-11 2-8-3z" fill="#222"/><path d="M30 18v22M17 42h26M31 28l8-7M29 28l-8-7" stroke="#222" stroke-width="4"/></svg>
                        <svg viewBox="0 0 60 55"><path d="M18 34l24-3 6 14H14z" fill="#a36a35" stroke="#4a2a0c" stroke-width="2"/><path d="M30 34V22" stroke="#348a1e" stroke-width="4"/><path d="M30 27Q14 24 15 11q14 1 15 16zM31 24q1-15 15-17 0 15-15 17z" fill="#45ad2a" stroke="#1f6a12" stroke-width="2"/></svg>
                    </div>
                </div>
                <p>Tree<b>+</b></p>
            </div>
        </div>

        <div class="gh-bar">
            <svg viewBox="0 0 60 54"><path d="M12 17l6-9h16l12 7v30H9z" fill="#eee" stroke="#666" stroke-width="2"/><path d="M9 23l34-2 4 24H9z" fill="#68b93a" stroke="#2e741a" stroke-width="2"/></svg>
            <svg viewBox="0 0 60 54"><path d="M8 7h44v40H13l-5-5z" fill="#2d6fc4" stroke="#143f84" stroke-width="2.500"/><path d="M17 8h27v17H17z" fill="#fff"/><path d="M18 33h23v13H18z" fill="#ddd"/><path d="M30 35h6v10h-6z" fill="#235"/></svg>
            <i class="sep"></i>
            <div class="zoom-box">138%<svg viewBox="0 0 24 24"><path d="M5 9l7 7 7-7" fill="none" stroke="#555" stroke-width="2.500"/></svg></div>
            <svg viewBox="0 0 60 54"><path d="M12 19V8h11M37 8h11v11M48 34v11H37M23 45H12V34" fill="none" stroke="#111" stroke-width="7"/><path d="M24 21l12 11M36 21L24 32" stroke="#222" stroke-width="4"/></svg>
            <i class="drop"></i>
            <svg viewBox="0 0 60 54"><path d="M8 28Q30 3 52 28 30 49 8 28z" fill="#fff" stroke="#234a68" stroke-width="3"/><circle cx="30" cy="27" r="11" fill="#2e78ae"/><circle cx="30" cy="27" r="5" fill="#111"/></svg>
            <i class="drop"></i>
            <svg viewBox="0 0 60 54"><path d="M6 43q11-9 5-16-3-4-5 2M12 43q9 4 12-6" fill="none" stroke="#222" stroke-width="3"/><path d="M19 36L39 10l9 4-5 20-20 9z" fill="#e23b42" stroke="#8a1418" stroke-width="2"/><path d="M19 36l7-8 5 10-9 5z" fill="#444"/></svg>
            <div class="preview">
                <svg viewBox="0 0 57 54"><ellipse cx="28" cy="36" rx="18" ry="9" fill="#222"/><path d="M16 29V15q5-8 18-5l8 6v14q-12 8-26-1z" fill="#ddd" stroke="#888" stroke-width="2"/><path d="M16 30q12 8 26 0" fill="none" stroke="#fff" stroke-width="3"/></svg>
                <svg viewBox="0 0 57 54"><path d="M7 31l19-21 17 3 6 13-18 20-17-3z" fill="#eee" stroke="#555" stroke-width="2.500"/><path d="M20 17l15 20M15 26l13-7M31 12l10 14" stroke="#777" stroke-width="3"/></svg>
                <svg class="pressed" viewBox="0 0 57 54"><path d="M6 31l20-23 19 3 7 14-21 23-18-4z" fill="#b8141c" stroke="#5c0508" stroke-width="2"/><ellipse cx="19" cy="32" rx="10" ry="13" fill="#d93a3e" transform="rotate(-25 19 32)"/></svg>
                <i class="sep"></i>
                <svg viewBox="0 0 57 54"><path d="M8 31l19-21 17 3 6 13-19 20-17-3z" fill="#4ba529" stroke="#234a14" stroke-width="2"/><path d="M9 29l7-8 19 19-6 6-15-3z" fill="#eee" stroke="#555" stroke-width="2"/></svg>
                <svg viewBox="0 0 57 54"><circle cx="28" cy="27" r="19" fill="#f49a32" stroke="#553c20" stroke-width="2"/><path d="M28 8a19 19 0 0 1 0 38z" fill="#e6e6e6" stroke="#666" stroke-width="2"/></svg>
                <i class="sep narrow"></i>
                <svg viewBox="0 0 57 54"><circle cx="28" cy="27" r="18" fill="#5c9ee8" stroke="#204a88" stroke-width="3"/><circle cx="24" cy="20" r="9" fill="#acd3ff"/></svg>
                <i class="drop"></i>
            </div>
        </div>

        <div class="canvas">
            <svg class="wires" viewBox="630 172 592 474" fill="none">
                <defs>
                    <path id="w1" d="M709 170C713 187 718 205 722 217C727 235 729 251 725.500 268"/>
                    <path id="w2" d="M760 278C800 264 838 214 877 170"/>
                    <path id="w3" d="M759 335C776 350 782 385 781.500 420C779 480 762 560 767 605C769 620 776 637 784 648"/>
                    <path id="w4" d="M989 370.500C1017 371 1017 350 1012 330C1003 300 1004 280 1030 278"/>
                    <path id="w5" d="M1175 171C1160 205 1148 228 1147.500 250C1148 275 1170 286 1203 286.500"/>
                    <path id="w6" d="M1180 170L1224 186"/>
                    <path id="w7" d="M759 333.500H779M835 342.500H849M909 352H927M1093 306H1121M1179 306L1205 305"/>
                    <path id="w8" d="M958.500 398C959 425 953 440 953 460C955 492 970 508 1003 508"/>
                </defs>
                <path class="grid" d="M747.500 172v474M886.500 172v474M1024.500 172v474M1163 172v474M630 184.500h592M630 231h592M630 277h592M630 323h592M630 369.500h592M630 415.500h592M630 461.500h592M630 507.500h592M630 553.500h592M630 600.500h592"/>
                <g class="wire"><use href="#w1"/><use href="#w2"/><use href="#w3"/><use href="#w4"/><use href="#w5"/><use href="#w6"/><use href="#w7"/></g>
                <g class="wire-core"><use href="#w1"/><use href="#w2"/><use href="#w3"/><use href="#w4"/><use href="#w5"/><use href="#w6"/><use href="#w7"/></g>
                <use href="#w8" class="wire selected"/><use href="#w8" class="wire-core selected"/>
                <path d="M695 208C709 207 716 213 705 219C685 231 660 238 630 249" stroke="#55534b" stroke-width="2.600"/>
                <path d="M654 301.500C675 301 685 298 699 295M654 302C675 302 690 300 699 299M654 302H698M654 302.500C675 303 688 306 698 306M654 302C675 302 690 303 698 304" stroke="#3b3a36" stroke-width="1.800"/>
                <g class="grips">
                    <circle cx="693" cy="208" r="3.300"/><circle cx="698" cy="305.700" r="3.300"/><circle cx="758" cy="278" r="3.300"/><circle cx="758" cy="296.500" r="3.300"/><circle cx="758" cy="315" r="3.300"/><circle cx="758" cy="333.500" r="3.300"/>
                    <circle cx="779" cy="333.500" r="3.300"/><circle cx="835" cy="324" r="3.300"/><circle cx="835" cy="342.500" r="3.300"/>
                    <circle cx="850" cy="342.500" r="3.300"/><circle cx="909.500" cy="333.500" r="3.300"/><circle cx="909.500" cy="352" r="3.300"/>
                    <circle cx="927.500" cy="352" r="3.300"/><circle cx="927.500" cy="370.500" r="3.300"/><circle cx="927.500" cy="389" r="3.300"/><circle cx="988.500" cy="370.500" r="3.300"/>
                    <circle cx="1031.500" cy="278" r="3.300"/><circle cx="1031.500" cy="296.500" r="3.300"/><circle cx="1031.500" cy="315" r="3.300"/><circle cx="1031.500" cy="333.500" r="3.300"/><circle cx="1093" cy="306" r="3.300"/>
                    <circle cx="1121" cy="306" r="3.300"/><circle cx="1179.500" cy="306" r="3.300"/><circle cx="1205" cy="286.500" r="3.300"/><circle cx="1205" cy="305" r="3.300"/>
                    <circle cx="1003.500" cy="508" r="3.300"/><circle cx="1152" cy="508" r="3.300"/>
                </g>
            </svg>

            <div class="slider"><i class="ticks"></i><span>4</span><svg viewBox="0 0 24 24"><path d="M12 4l7 8-7 8-7-8z" fill="#fff" stroke="#111" stroke-width="4"/></svg></div>
            <div class="param"></div>

            <div class="node deconstruct">
                <div class="ins"><span>B</span></div>
                <svg viewBox="0 0 60 60"><path d="M18 16l9-10h28v30l-10 13H18z" fill="#f6b67a" stroke="#c64b08" stroke-width="4"/><path d="M22 18h24l9-11M46 18v28" fill="none" stroke="#c64b08" stroke-width="4"/><path d="M20 20h22v22H20z" fill="#d9cccc"/><path d="M4 30h25v25H4z" fill="#ffc020" stroke="#d45a08" stroke-width="4"/></svg>
                <div class="outs"><span>P</span><span>X</span><span>Y</span><span>Z</span></div>
            </div>
            <div class="node domain">
                <div class="ins"><span>I</span></div>
                <svg viewBox="0 0 60 60"><path d="M14 2h32v12H14z" fill="#2fc172"/><path d="M2 9h56" stroke="#222" stroke-width="2"/><path d="M14 2v26M46 2v26" stroke="#222" stroke-width="4"/><path d="M8 22h12l-6 8zM40 22h12l-6 8z" fill="#222"/><rect x="7" y="36" width="12" height="18" rx="5" fill="none" stroke="#222" stroke-width="4"/><path d="M40 39l7-4v20M40 55h13" fill="none" stroke="#222" stroke-width="4"/></svg>
                <div class="outs"><span>S</span><span>E</span></div>
            </div>
            <div class="node random">
                <div class="ins"><span>I</span></div>
                <svg viewBox="0 0 60 60" stroke="#111"><path d="M5 46h25M17 33v26" stroke-width="7"/><path d="M12 19h18M21 10v18M33 35h17M41 27v17M44 10h15M52 3v14M43 51h15M50 44v15" stroke-width="5"/><path d="M4 8h6M30 6h7M2 30h7M35 20h6M50 28h7M33 56h6M32 46h5" stroke-width="5" opacity=".7"/></svg>
                <div class="outs"><span>R</span><span>Pr</span></div>
            </div>
            <div class="node list-item">
                <div class="ins"><span>L</span><span>S</span><span>W</span></div>
                <svg viewBox="0 0 60 60"><path d="M6 9h34V0l15 12-15 12v-9H6z" fill="#111"/><path d="M4 32h54v20H4z" fill="#64c32c" stroke="#2e6414" stroke-width="2"/><path d="M17 32v20M31 32v20M45 32v20M4 40h54" stroke="#a2ee64" stroke-width="2"/></svg>
                <div class="outs"><span>L</span></div>
            </div>
            <div class="node insert">
                <div class="ins"><span>L</span><span>I</span><span>i</span><span>W</span></div>
                <svg viewBox="0 0 60 60"><path d="M23 2h16v56H23z" fill="#58b82a" stroke="#23570e" stroke-width="2"/><path d="M29 3v54" stroke="#a2ee64" stroke-width="4"/><path d="M2 18h22v11H2zM2 33h22v11H2z" fill="#d0131a" stroke="#6e0a0c" stroke-width="2"/><path d="M40 18h14l4 6-6 6 6 7-5 7H40M40 30h12" fill="none" stroke="#2d8a1c" stroke-width="5"/></svg>
                <div class="outs"><span>L</span></div>
            </div>
            <div class="node unit-z">
                <div class="ins"><span>F</span></div>
                <svg viewBox="0 0 60 60"><path d="M12 50L25 13" stroke="#111" stroke-width="5"/><path d="M30 2L15 17l15 5z" fill="#111"/><circle cx="11" cy="51" r="4" fill="#fff" stroke="#111" stroke-width="3"/><path d="M33 26h21L34 52h22" fill="none" stroke="#111" stroke-width="6"/></svg>
                <div class="outs"><span>V</span></div>
            </div>
            <div class="node move"><div class="ins"><span>G</span><span>T</span></div></div>

            <div class="panel">
                <p class="path">{0;0}</p>
                <ol><li><i>0</i>279.5</li><li><i>1</i>482.09</li><li><i>2</i>604.14</li><li><i>3</i>722.15</li><li><i>4</i>805.68</li></ol>
            </div>

            <svg class="pointer" viewBox="0 0 36 36"><circle cx="18" cy="18" r="17.500" fill="#dedd6a" opacity=".9"/><circle cx="19.500" cy="12" r="6" fill="none" stroke="#7d8b5a" stroke-width="2.400"/><path d="M14.500 11v11l2.500-2 2 4 1.800-.8-2-4h3.400z" fill="#fff" stroke="#444" stroke-width=".8"/></svg>

            <svg class="compass" viewBox="0 0 99 96"><defs><radialGradient id="ball"><stop offset="0" stop-color="#fff"/><stop offset=".7" stop-color="#d2d2d2"/><stop offset="1" stop-color="#aaa"/></radialGradient></defs><circle cx="52" cy="47" r="40" fill="url(#ball)" stroke="#222" stroke-width="3"/><circle cx="52" cy="47" r="36" fill="none" stroke="#fff" stroke-width="5"/><path d="M84 15A43 43 0 0 0 38 87" fill="none" stroke="#111" stroke-width="7"/><path d="M3 8l17 3-9 13z" fill="#111"/></svg>

            <div class="recent">
                <svg class="lit" viewBox="0 0 48 48"><path d="M6 38l11-21 3 14 10-20 2 18 9-16-2 22q-10-6-15 4-8-8-18-1z" fill="#9a6204"/></svg>
                <svg viewBox="0 0 48 48"><path d="M19 5h13v37H19z" fill="#5fbb33" stroke="#2c6a14"/><path d="M4 29V18l7 11V18" fill="none" stroke="#222" stroke-width="2.500"/><path d="M14 20h18v-6l13 9-13 9v-5H14z" fill="#b3191d"/></svg>
                <svg viewBox="0 0 48 48"><path d="M3 5h13v37H3z" fill="#5fbb33" stroke="#2c6a14"/><path d="M25 10h15v28H25z" fill="#c3161b"/><path d="M16 18h9v13h-9z" fill="#eee" stroke="#111" stroke-width="2"/></svg>
            </div>
        </div>

        <footer class="gh-status">
            <svg viewBox="0 0 30 30"><circle cx="15" cy="15" r="14" fill="#1d5a9c" stroke="#123a68" stroke-width="2"/><path d="M9 7q-2 9 6 9t6-9M15 11v11" fill="none" stroke="#cfe4ff" stroke-width="3"/></svg>
            <span>Autosave complete (32 seconds ago)</span>
            <span class="version">1.0.0007</span>
            <svg class="grip" viewBox="0 0 24 24"><path d="M18 3h3v3h-3zM11 10h3v3h-3zM18 10h3v3h-3zM4 17h3v3H4zM11 17h3v3h-3zM18 17h3v3h-3z" fill="#888"/></svg>
        </footer>
    </section>
</body>
</html>
```

FILE: styles.css
```css
* {
    box-sizing: border-box;
}
body {
    margin: 0;
    width: 1280px;
    height: 720px;
    overflow: hidden;
    position: relative;
    display: flex;
    flex-direction: column;
    font-family: "Open Sans", "Noto Sans", sans-serif;
    font-size: 8px;
    letter-spacing: -0.2px;
    line-height: 1;
    color: #1c1c1c;
    background: #e8e9ef;
    text-rendering: geometricPrecision;
    white-space: nowrap;
}
p, ol {
    margin: 0;
    padding: 0;
}
svg {
    display: block;
    flex: none;
}

/* Title and menu */
.titlebar {
    height: 14px;
    display: flex;
    align-items: center;
    background: #fdfdfd;
    padding-left: 2px;
}
.app-icon {
    width: 10px;
    height: 10px;
}
.title-text {
    margin-left: 4px;
    padding-top: 3px;
    font-size: 8.1px;
}
.win-buttons {
    width: 84px;
    height: 14px;
    margin-left: auto;
}
.menubar {
    height: 15px;
    display: grid;
    grid-template-columns: 21.5px 22.5px 26px 30px 35px 27px 28px 47.5px 45px 27px 37px 34px 32px 30px;
    align-items: center;
    padding: 3px 0 0 4.500px;
    background: #fdfdfd;
    font-size: 7.800px;
}

/* Command area */
.top {
    height: 80px;
    display: flex;
}
.command {
    width: 524px;
    margin-left: 2px;
    padding-top: 2px;
    border-left: 2px solid #d5d9e2;
}
.history {
    height: 62px;
    padding: 2px 0 0 1px;
    background: #fdfdfd;
    border-bottom: 1px solid #bbb;
    margin-right: 2px;
    font-size: 7.900px;
}
.history p {
    height: 10.200px;
    line-height: 9px;
}
.prompt {
    height: 12px;
    margin-right: 2px;
    padding-left: 1px;
    display: flex;
    align-items: center;
    background: #fdfdfd;
    font-size: 7.700px;
}
.prompt b {
    padding-top: 2px;
}
.caret {
    width: 1px;
    height: 10px;
    background: #222;
    margin-left: 2px;
}
.spinner {
    width: 10px;
    height: 11px;
    margin: 0 1px 0 auto;
}
.toolbars {
    flex: 1;
    margin-left: 3px;
    padding-top: 2px;
    border-left: 1px solid #d0d4dd;
}
.tabs {
    display: grid;
    grid-template-columns: 46px 43px 42px 38.500px 36px 71px 43px 50px 54px 60px 51.500px 53px 59.500px 42px 37px 8px 12px;
    height: 13px;
    padding-left: 2px;
    font-size: 7.800px;
}
.tabs span {
    background: #d2d3d6;
    border-radius: 5px 5px 0 0;
    margin: 0 1px 0 1px;
    padding-left: 5px;
    line-height: 15px;
    height: 13px;
}
.tabs .active {
    background: #eceef3;
    border: 1px solid #c9ccd3;
    border-bottom: 0;
    line-height: 13px;
}
.tabs .last {
    padding-left: 4px;
    letter-spacing: -0.300px;
}
.tabs b {
    line-height: 12px;
    font-size: 9px;
}
.gear {
    width: 10px;
    height: 10px;
}
.file-icons {
    display: flex;
    padding: 1px 0 0 2px;
}
.file-icons svg {
    width: 18.900px;
    height: 16px;
}

/* Workspace */
.workspace {
    height: 536px;
    display: flex;
}
.palette {
    width: 43px;
    padding: 5px 0 0 1px;
    display: grid;
    grid-template-columns: 18.300px 18.300px;
    grid-auto-rows: 18.700px;
    border-top: 1px solid #d5d8df;
}
.palette svg {
    width: 18px;
    height: 18.670px;
}
.more {
    position: relative;
}
.more::after {
    content: "";
    position: absolute;
    right: 1px;
    bottom: 1px;
    border: 2px solid;
    border-color: transparent #777 #777 transparent;
}
.viewport {
    width: 586px;
    height: 535px;
    margin-top: 1px;
    background: #bababa;
    position: relative;
}
.view-label {
    position: absolute;
    left: 0;
    top: 0;
    width: 61px;
    height: 12px;
    display: flex;
    padding: 2px 0 0 5px;
    background: #8e9fba;
    font-size: 7.800px;
    line-height: 9px;
}
.view-label i {
    margin: -1px 0 0 auto;
    width: 8px;
    height: 10px;
    border-left: 1px solid #6d7d98;
}
.view-label i::after {
    content: "";
    display: block;
    width: 0;
    margin: 4px 0 0 1px;
    border: 2.500px solid transparent;
    border-top: 3px solid #111;
    border-bottom: 0;
}
.scene {
    width: 586px;
    height: 535px;
}
.axis {
    font-size: 8.500px;
    fill: #444;
}
.layers {
    width: 56px;
    margin-left: auto;
    display: flex;
    flex-direction: column;
}
.layers-head {
    height: 17px;
    margin-top: 2px;
    border-top: 1px solid #ccd0da;
    display: flex;
    justify-content: flex-end;
    padding: 6px 1px 0 0;
}
.layers-tools {
    height: 16px;
    display: flex;
    padding: 1px 0 0 1px;
    border-top: 1px solid #ccd0da;
    background: #f0f1f6;
}
.layers-tools svg {
    width: 16px;
    height: 14px;
}
.layers-list {
    flex: 1;
    background: #fdfdfd;
    border-top: 1px solid #ccd0da;
    border-right: 1px solid #c6cae0;
    margin-right: 1px;
}
.layers-list p {
    padding: 5px 0 0 41px;
    height: 17px;
}
.layer-row {
    display: flex;
    gap: 5px;
    padding-left: 25px;
}
.swatch {
    width: 9px;
    height: 9px;
    background: #000;
}
.material {
    width: 9px;
    height: 9px;
    border: 1px solid #e4e4e4;
    border-radius: 50%;
}
.layers-scroll {
    height: 11px;
    margin-bottom: -11px;
    z-index: 1;
    background: #f0f0f0;
    display: flex;
    justify-content: flex-end;
    padding-right: 3px;
}
.layers-scroll svg {
    width: 10px;
    height: 10px;
}

/* View tabs */
.view-tabs {
    height: 15px;
    padding-left: 43px;
    display: grid;
    grid-template-columns: 50px 24px 28.500px 27px 20px;
    font-size: 7.800px;
}
.view-tabs span {
    height: 13px;
    margin-right: 3px;
    line-height: 15px;
    padding-left: 5px;
    background: #d6d6d8;
    border-radius: 0 0 4px 4px;
}
.view-tabs .active, .view-tabs .add {
    background: #f1f2f6;
    border: 1px solid #c9ccd3;
    border-top: 0;
    margin-right: 1px;
}
.view-tabs .add svg {
    width: 7px;
    height: 7px;
    margin-top: 3px;
}

/* Object snaps */
.osnap {
    height: 20px;
    padding-left: 6px;
    display: grid;
    grid-template-columns: 29px 32px 34px 29.500px 29.500px 24.500px 31px 28px 34.500px 32.500px 37.500px 45.500px 50px;
    align-items: center;
    border-bottom: 1px solid #c8ccd6;
}
.osnap label {
    display: flex;
    align-items: center;
    gap: 2px;
    line-height: 10px;
    height: 10px;
    padding-top: 1px;
}
.osnap i {
    width: 9px;
    height: 9px;
    margin-top: -1px;
    background: #fff;
    border: 1px solid #444;
}
.osnap .on::after {
    content: "";
    display: block;
    width: 5px;
    height: 3px;
    margin: 1px 0 0 1px;
    border: solid #222;
    border-width: 0 0 1px 1px;
    transform: rotate(-45deg);
}
.osnap .off {
    width: 8px;
    height: 8px;
    background: #ddd;
    border-color: #bbb;
    margin-right: 1px;
}

/* Status bar */
.status {
    height: 13px;
    display: grid;
    grid-template-columns: 33.500px 58px 59px 58.500px 58.500px 111.500px 44px 30px 31px 32px 49px 39px 61px 27px 1fr;
    line-height: 15px;
    text-align: center;
    background: #eff0f4;
}
.status > * {
    height: 13px;
    border-right: 1px solid #c6c9d0;
}
.status b {
    background: #e2ecf4;
    font-size: 7.700px;
}
.status .layer {
    display: flex;
    align-items: flex-start;
    gap: 2px;
    padding-left: 2px;
}
.layer i {
    width: 9px;
    height: 9px;
    margin-top: 2px;
    background: #000;
}
.status .memory {
    text-align: left;
    padding-left: 1px;
    background: #e8e9ef;
}

/* Taskbar */
.taskbar {
    height: 27px;
    display: flex;
    background: linear-gradient(90deg, #cfe3ea, #cee0ea 55%, #d4d9e6 80%, #d4d8e6);
}
.start {
    width: 33px;
    padding: 8px 0 0 11px;
}
.start svg {
    width: 11px;
    height: 11px;
}
.search {
    width: 228px;
    height: 25px;
    margin-top: 1px;
    padding-left: 6px;
    display: flex;
    align-items: center;
    gap: 7px;
    background: #fdfdfd;
    font-size: 9.900px;
    color: #444;
}
.search span {
    padding-top: 2px;
}
.search svg {
    width: 12px;
    height: 12px;
}
.apps {
    display: flex;
}
.apps span {
    width: 32.750px;
    display: flex;
    justify-content: center;
    align-items: center;
    border-bottom: 2px solid transparent;
    background-clip: padding-box;
}
.apps svg {
    width: 16px;
    height: 16px;
    margin-top: 2px;
}
.apps .open {
    border-image: linear-gradient(90deg, transparent 12%, #0c72c4 12%, #0c72c4 88%, transparent 88%) 2;
}
.apps .current {
    background: #f2f6f9;
    border-image: none;
    border-bottom: 2px solid #0c72c4;
}
.glyph {
    font-size: 19px;
    font-weight: bold;
    fill: #fff;
    text-anchor: middle;
    letter-spacing: 0;
}
.big {
    font-size: 24px;
    font-weight: normal;
}
.pr {
    fill: #d79cf8;
}
.ps {
    fill: #31c5f0;
}
.six {
    font-size: 17px;
    fill: #fff;
}
.tray {
    margin-left: auto;
    display: flex;
    align-items: center;
}
.tray svg {
    width: 12px;
    height: 12px;
    margin-right: 9.400px;
}
.lang {
    margin: 0 7px 0 0;
    padding-top: 2px;
    letter-spacing: -0.3px;
}
.clock {
    width: 40px;
    display: flex;
    flex-direction: column;
    align-items: center;
    gap: 4px;
    padding-top: 1px;
}
.tray .notify {
    width: 18px;
    height: 18px;
    margin: 0 11px 0 10px;
}
.notify text {
    font-size: 24px;
    text-anchor: middle;
}

/* Grasshopper window */
.gh {
    position: absolute;
    left: 629px;
    top: 39px;
    width: 594px;
    height: 623px;
    display: flex;
    flex-direction: column;
    background: #f0f0f0;
    border: 1px solid #a6a6ac;
    box-shadow: 0 1px 5px rgba(0, 0, 0, 0.45);
}
.gh-title {
    height: 20px;
    display: flex;
    align-items: center;
    padding-left: 4.500px;
    background: #fff;
    color: #888;
}
.gh-title span {
    padding-top: 1px;
}
.gh-title svg {
    width: 72px;
    height: 12px;
    margin: -1px 7.500px 0 auto;
}
.gh-menu {
    height: 18px;
    display: grid;
    grid-template-columns: 25px 26.500px 29px 38px 42px 29.500px 1fr auto;
    align-items: center;
    padding: 3px 6px 0 8px;
    background: linear-gradient(90deg, #f0f0f0, #fafafa);
}
.gh-tabs {
    height: 15px;
    display: grid;
    grid-template-columns: 23px 28px 22px 23px 23px 21px 26px 19px 26px 22px 40px 45px 21px 43px 48px 19px 19px 19px 19px 18.500px 18.500px 20px;
    align-items: center;
    padding: 2px 0 0 6px;
    color: #777;
    font-size: 7.600px;
    border-bottom: 1px solid #aaa;
}
.gh-tabs .active {
    color: #222;
    background: #fafafa;
    border: 1px solid #999;
    border-bottom: 0;
    border-radius: 4px 4px 0 0;
    width: 23px;
    height: 15px;
    margin: -2px 0 0 -6px;
    line-height: 15px;
    text-align: center;
}
.ribbon {
    height: 58px;
    display: flex;
    gap: 2.800px;
    padding: 2px 0 0 1.500px;
    background: linear-gradient(#dcdcdc, #f2f2f2 70%);
    border-right: 1px solid #aaa;
}
.group {
    height: 48px;
    border: 1px solid #999;
    border-radius: 3px;
    background: linear-gradient(#dadada, #f4f4f4);
}
.cells {
    height: 38px;
    display: flex;
}
.col svg {
    width: 19.600px;
    height: 18.300px;
}
.cells .sep {
    width: 1px;
    margin: 5px 2.200px 4px;
    background: #bbb;
}
.group p {
    height: 8px;
    line-height: 7.500px;
    position: relative;
    background: #1c1c1c;
    color: #fff;
    text-align: center;
    padding-right: 8px;
    font-size: 7px;
    letter-spacing: 0;
    border-radius: 0 0 2px 2px;
}
.group b {
    position: absolute;
    right: 1px;
}
.gh-bar {
    height: 21px;
    display: flex;
    align-items: center;
    border-top: 1px solid #888;
    background: #fdfdfd;
}
.gh-bar svg {
    width: 20px;
    height: 18px;
}
.gh-bar .sep {
    width: 1px;
    height: 14px;
    background: #ddd;
    margin: 0 2px 0 3px;
}
.gh-bar .zoom-box {
    width: 90px;
    height: 15px;
    display: flex;
    align-items: center;
    padding-left: 2px;
    border: 1px solid #999;
    background: #fff;
    margin-right: 2px;
}
.zoom-box svg {
    width: 8px;
    height: 8px;
    margin: 0 2px 0 auto;
}
.drop {
    border: 2px solid transparent;
    border-top: 2px solid #222;
    border-bottom: 0;
    margin: 0 2px;
}
.preview {
    margin-left: auto;
    display: flex;
    align-items: center;
}
.preview svg {
    width: 19.500px;
    height: 18px;
}
.preview .pressed {
    border: 1px solid #2c7cb8;
    background: #d3e5f2;
}
.preview .sep {
    margin: 0 3px 0 5px;
}
.preview .narrow {
    margin: 0 1px 0 2px;
}
.preview .drop {
    margin: 0 3px 0 -1px;
}

/* Canvas */
.canvas {
    height: 474px;
    position: relative;
    overflow: hidden;
    background: linear-gradient(#c9c7bf, #d2cdc5 14px);
    border-left: 1px solid #777;
}
.wires {
    width: 592px;
    height: 474px;
    margin-left: -1px;
}
.grid {
    stroke: #c2beb6;
}
.wire {
    stroke: #4f4e48;
    stroke-width: 4.200;
}
.wire-core {
    stroke: #b3b0a5;
    stroke-width: 1.700;
}
.wire.selected {
    stroke: #6ba43a;
}
.wire-core.selected {
    stroke: #9ed070;
}
.grips {
    fill: #fff;
    stroke: #111;
    stroke-width: 1.600;
}
.node {
    position: absolute;
    display: flex;
    align-items: center;
    justify-content: space-between;
    padding: 1px 9.500px 1px 6px;
    border: 1px solid #45434c;
    border-radius: 2px;
    background: linear-gradient(#e6e6ec, #b4b3c0 7px, #8d8b9b);
    box-shadow: 1px 1px 2px rgba(0, 0, 0, 0.3);
    font-size: 8.900px;
    letter-spacing: 0;
    color: #1d1d22;
}
.node svg {
    width: 18px;
    height: 18px;
}
.ins, .outs {
    height: 100%;
    display: flex;
    flex-direction: column;
    justify-content: space-around;
}
.ins {
    align-items: flex-end;
}
.deconstruct {
    left: 67px;
    top: 95px;
    width: 60px;
    height: 78px;
}
.domain {
    left: 148px;
    top: 141px;
    width: 56px;
    height: 41px;
}
.random {
    left: 219px;
    top: 150px;
    width: 60px;
    height: 41px;
}
.list-item {
    left: 296px;
    top: 169px;
    width: 62px;
    height: 59px;
}
.insert {
    left: 400.500px;
    top: 95px;
    width: 61.500px;
    height: 78px;
}
.unit-z {
    left: 490px;
    top: 121px;
    width: 59px;
    height: 26px;
}
.unit-z svg {
    width: 17px;
    height: 17px;
}
.move {
    left: 574px;
    top: 103px;
    width: 40px;
    height: 41px;
}
.slider {
    position: absolute;
    left: -4px;
    top: 27px;
    width: 66px;
    height: 19px;
    display: flex;
    align-items: center;
    justify-content: flex-end;
    gap: 4px;
    padding-right: 5px;
    border: 1px solid #666;
    border-radius: 2px;
    background: linear-gradient(#fafafa, #dcdcdf);
    font-size: 8.700px;
}
.slider svg {
    width: 8px;
    height: 8px;
}
.slider .ticks {
    width: 33px;
    height: 2px;
    margin: 0 auto 5px 6px;
    background: repeating-linear-gradient(90deg, #ccc 0 1px, transparent 1px 4px);
}
.param {
    position: absolute;
    left: -5px;
    top: 122px;
    width: 30px;
    height: 16px;
    border: 1px solid #45434c;
    border-right: 6px solid #26262c;
    border-radius: 2px 8px 8px 2px;
    background: linear-gradient(#d0d0d8, #8d8b9b);
}
.panel {
    position: absolute;
    left: 373px;
    top: 231.500px;
    width: 148px;
    height: 210px;
    padding: 1px;
    border: 1px solid #3a6b18;
    border-radius: 3px;
    background: linear-gradient(#85e22d, #85e22d) 12px 0 / 1px 100% no-repeat, #96fb33;
    font-family: "Liberation Mono", monospace;
    font-size: 9.900px;
    letter-spacing: 0.100px;
    color: #35691a;
    box-shadow: inset 0 0 0 1px #b5ff70;
}
.panel .path {
    height: 16px;
    line-height: 13px;
    text-align: right;
    padding-right: 11px;
    background: #7fd12c;
}
.panel ol {
    list-style: none;
}
.panel li {
    height: 14.800px;
    line-height: 12px;
    padding-left: 2px;
}
.panel li:nth-child(even) {
    background: rgba(60, 140, 20, 0.13);
}
.panel li i {
    display: inline-block;
    width: 11.500px;
    font-style: normal;
}
.pointer {
    position: absolute;
    left: 237px;
    top: 233.500px;
    width: 36px;
    height: 36px;
}
.compass {
    position: absolute;
    left: 553px;
    top: 438px;
    width: 33px;
    height: 32px;
}
.recent {
    position: absolute;
    left: 0;
    top: 455px;
    width: 60px;
    height: 18.500px;
    display: flex;
    align-items: center;
    gap: 2px;
    border: 1px solid #444;
    background: linear-gradient(90deg, #eee 0 88%, #777);
}
.recent svg {
    width: 17px;
    height: 16px;
}
.recent .lit {
    background: #ffc52c;
    border: 1px solid #9a6a10;
}
.gh-status {
    flex: 1;
    display: flex;
    align-items: center;
    padding: 3px 0 0 2px;
    background: #f0f0f0;
}
.gh-status svg {
    width: 10px;
    height: 10px;
    margin-right: 3px;
}
.gh-status span {
    padding-top: 2px;
}
.version {
    margin-left: auto;
    color: #777;
}
.gh-status .grip {
    width: 8px;
    height: 8px;
    margin: 4px 0 0 12px;
}
```
